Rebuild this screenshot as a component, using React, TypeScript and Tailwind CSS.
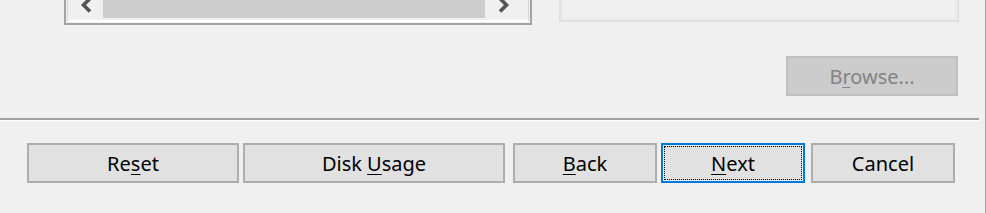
const font = { fontFamily: '"Noto Sans", "Open Sans", sans-serif' };

function Key({ children }: { children: string }) {
  return <span className="underline underline-offset-[3px] decoration-1">{children}</span>;
}

function WinButton({ className = "", children }: { className?: string; children: React.ReactNode }) {
  return (
    <button className={`h-[40px] bg-[#e1e1e1] border-2 border-[#adadad] text-black text-[20px] leading-none pt-[2px] ${className}`}>
      {children}
    </button>
  );
}

function Chevron({ left }: { left?: boolean }) {
  return (
    <svg width="14" height="16" viewBox="0 0 14 16" className="shrink-0">
      <path
        d={left ? "M11 1.5 L4.5 8 L11 14.5" : "M3 1.5 L9.5 8 L3 14.5"}
        fill="none"
        stroke="#555555"
        strokeWidth="3.6"
      />
    </svg>
  );
}

export default function App() {
  return (
    <div className="w-[986px] h-[213px] bg-[#f0f0f0] border-r border-[#a0a0a0] overflow-hidden flex flex-col" style={font}>
      {/* top row: list view bottom edge + disabled text box */}
      <div className="h-[25px] flex items-start overflow-hidden shrink-0">
        <div className="ml-[64px] w-[468px] h-[25px] border-x-2 border-b-2 border-[#a3a3a3] px-[1px] pb-[1px] flex flex-col justify-end">
          <div className="flex-1 border-l border-[#7f7f7f] border-r border-[#d6d6d6] border-b-2 border-b-white flex flex-col justify-end overflow-hidden">
            <div className="h-[26px] -mt-[8px] mb-[2px] flex items-center">
              <div className="w-[35px] flex justify-center pl-[1px]">
                <Chevron left />
              </div>
              <div className="h-[26px] w-[382px] bg-[#cdcdcd]" />
              <div className="flex-1 flex justify-center pr-[6px]">
                <Chevron />
              </div>
            </div>
          </div>
        </div>
        <div className="ml-[27px] w-[400px] h-[22px] border-x-2 border-b-2 border-[#e0e0e0] px-[1px] pb-[1px]">
          <div className="h-full border-x border-b border-[#e8e8e8]" />
        </div>
      </div>

      {/* browse */}
      <div className="mt-[31px] flex justify-end pr-[27px] shrink-0">
        <button className="w-[172px] h-[40px] bg-[#cccccc] border-2 border-[#bfbfbf] text-[#838383] text-[20px] leading-none pt-[2px]">
          B<Key>r</Key>owse...
        </button>
      </div>

      {/* separator */}
      <div className="mt-[22px] mr-[6px] shrink-0 border-t-2 border-[#a0a0a0] border-b border-b-white" />

      {/* wizard buttons */}
      <div className="mt-[22px] flex items-center shrink-0">
        <WinButton className="ml-[27px] w-[212px]">
          Re<Key>s</Key>et
        </WinButton>
        <WinButton className="ml-[4px] w-[262px]">
          Disk <Key>U</Key>sage
        </WinButton>
        <WinButton className="ml-[8px] w-[144px]">
          <Key>B</Key>ack
        </WinButton>
        <button className="ml-[4px] w-[144px] h-[40px] bg-[#e5f1fb] border-2 border-[#0078d7] p-[1px] text-black text-[20px] leading-none">
          <span className="h-full w-full flex items-center justify-center pt-[2px] border border-dotted border-black bg-[#e1e1e1]">
            <Key>N</Key>ext
          </span>
        </button>
        <WinButton className="ml-[6px] w-[144px]">Cancel</WinButton>
      </div>
    </div>
  );
}
